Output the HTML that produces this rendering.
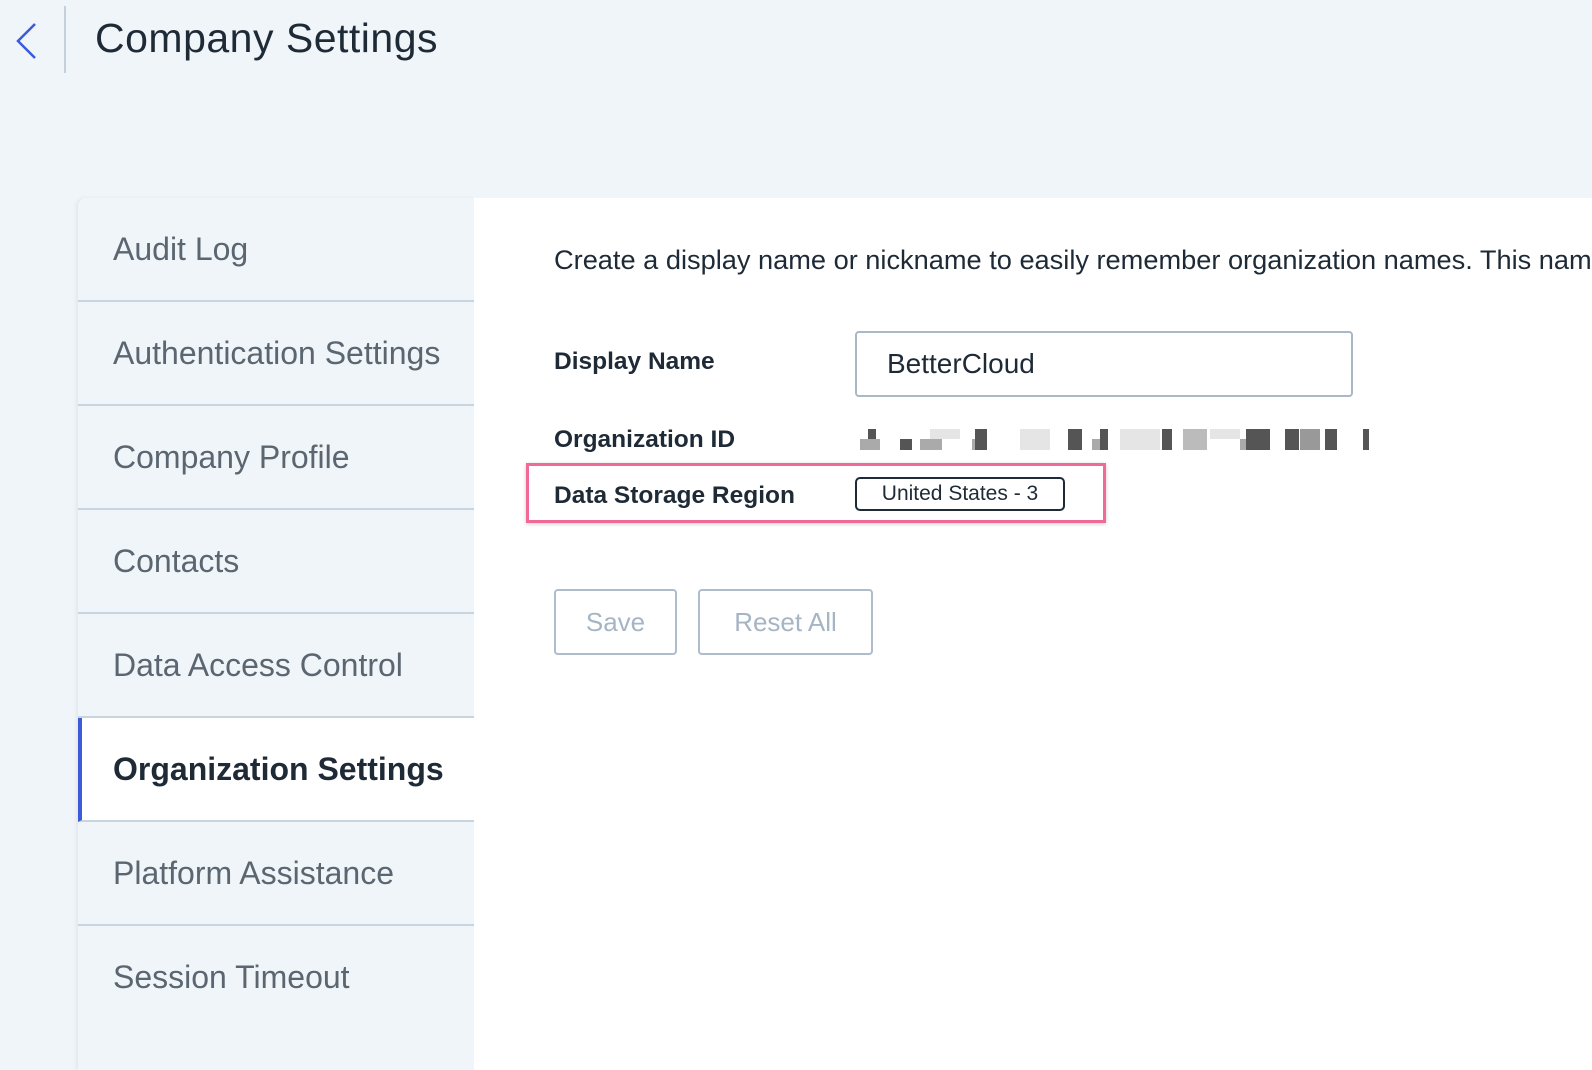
<!DOCTYPE html>
<html><head><style>
body{margin:0;width:1592px;height:1070px;background:#f0f5f9;font-family:"Liberation Sans",sans-serif;position:relative;overflow:hidden;color:#1e2a36}
.a{position:absolute}
.nav{left:78px;top:198px;width:396px;height:872px;background:#f0f5f9;border-radius:8px 0 0 0;box-shadow:-2px 0 4px rgba(0,0,0,.06)}
.item{position:absolute;left:0;width:396px;height:104px;border-bottom:2px solid #c8d4de;font-size:32px;color:#5b6670;box-sizing:border-box;padding-left:35px;line-height:102px}
.main{left:474px;top:198px;width:1118px;height:872px;background:#fff}
.lbl{font-size:24.5px;font-weight:bold;color:#1e2a36}
.btn{border:2px solid #aebccb;border-radius:4px;color:#a6b5c4;font-size:26px;text-align:center;box-sizing:border-box;line-height:62px}
</style></head><body>
<svg class="a" style="left:12px;top:21px" width="26" height="40"><path d="M23 3 L6 20 L23 37" fill="none" stroke="#3b5bdb" stroke-width="2.5"/></svg>
<div class="a" style="left:64px;top:6px;width:2px;height:67px;background:#c4d0dc"></div>
<div class="a" style="left:95px;top:15px;font-size:41px;color:#1e2a36;letter-spacing:.5px">Company Settings</div>
<div class="a nav">
<div class="item" style="top:0">Audit Log</div>
<div class="item" style="top:104px">Authentication Settings</div>
<div class="item" style="top:208px">Company Profile</div>
<div class="item" style="top:312px">Contacts</div>
<div class="item" style="top:416px">Data Access Control</div>
<div class="item" style="top:520px;background:#fff;border-left:4px solid #3b5bdb;padding-left:31px;color:#1e2a36;font-weight:bold">Organization Settings</div>
<div class="item" style="top:624px">Platform Assistance</div>
<div class="item" style="top:728px;border:none">Session Timeout</div>
</div>
<div class="a main"></div>
<div class="a" style="left:554px;top:244px;font-size:27.2px;white-space:nowrap;color:#1e2a36">Create a display name or nickname to easily remember organization names. This name</div>
<div class="a lbl" style="left:554px;top:348px">Display Name</div>
<div class="a" style="left:855px;top:331px;width:498px;height:66px;border:2px solid #a9b7c6;border-radius:4px;box-sizing:border-box;font-size:28px;line-height:62px;padding-left:30px">BetterCloud</div>
<div class="a lbl" style="left:554px;top:426px">Organization ID</div>
<svg class="a" style="left:860px;top:429px" width="510" height="21">
<g fill="#aaa"><rect x="0" y="10" width="20" height="11"/><rect x="60" y="10" width="22" height="11"/><rect x="112" y="10" width="14" height="11"/><rect x="232" y="10" width="14" height="11"/><rect x="323" y="0" width="24" height="21" fill="#bbb"/><rect x="380" y="10" width="30" height="11"/><rect x="440" y="0" width="20" height="21" fill="#999"/></g>
<g fill="#555"><rect x="8" y="0" width="8" height="10"/><rect x="40" y="10" width="12" height="11"/><rect x="115" y="0" width="12" height="21"/><rect x="208" y="0" width="14" height="21"/><rect x="240" y="0" width="8" height="21"/><rect x="302" y="0" width="10" height="21"/><rect x="386" y="0" width="24" height="21"/><rect x="425" y="0" width="14" height="21"/><rect x="465" y="0" width="12" height="21"/><rect x="503" y="0" width="6" height="21"/></g>
<g fill="#e5e5e5"><rect x="70" y="0" width="30" height="10"/><rect x="160" y="0" width="30" height="21"/><rect x="260" y="0" width="40" height="21"/><rect x="350" y="0" width="30" height="10"/></g>
</svg>
<div class="a" style="left:526px;top:463px;width:580px;height:60px;border:3px solid #f06a97;box-sizing:border-box;box-shadow:0 1px 4px rgba(0,0,0,.2)"></div>
<div class="a lbl" style="left:554px;top:482px">Data Storage Region</div>
<div class="a" style="left:855px;top:477px;width:210px;height:34px;border:2px solid #1e2a36;border-radius:5px;box-sizing:border-box;font-size:21px;text-align:center;line-height:29px">United States - 3</div>
<div class="a btn" style="left:554px;top:589px;width:123px;height:66px">Save</div>
<div class="a btn" style="left:698px;top:589px;width:175px;height:66px">Reset All</div>
</body></html>
